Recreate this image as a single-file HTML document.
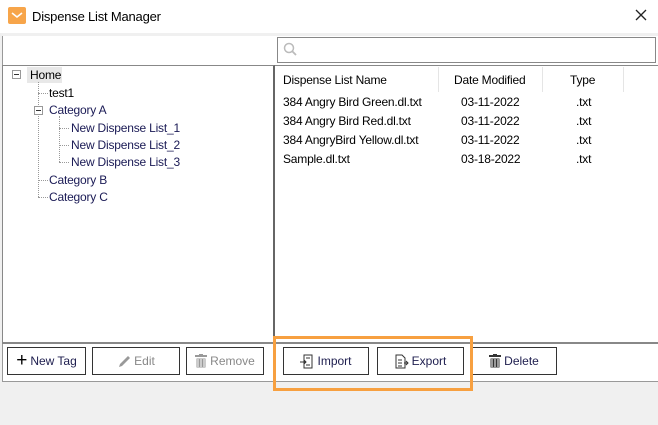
<!DOCTYPE html>
<html><head><style>
body{margin:0;width:658px;height:425px;background:#f0f0f0;font-family:"Liberation Sans",sans-serif;font-size:12px;color:#000;position:relative;overflow:hidden}
.a{position:absolute}
.btn{position:absolute;top:347px;height:28px;border:1px solid #333;background:#fff;box-sizing:border-box;display:flex;align-items:center;justify-content:center;gap:3px;font-size:12px}
.t{position:absolute;white-space:nowrap;letter-spacing:-0.2px}
.dot{position:absolute;border-color:#999;border-style:dotted;border-width:0}
.n{color:#1a1a55}
</style></head><body>
<div class="a" style="left:0;top:0;width:658px;height:33px;background:#fff"></div>
<div class="a" style="left:8px;top:7px;width:18px;height:17px;background:#f7a54a;border-radius:2px"></div>
<svg class="a" style="left:10px;top:10px" width="14" height="10"><path d="M2 3 L7 7 L12 3" stroke="#fff" stroke-width="1.6" fill="none"/></svg>
<div class="t" style="left:32px;top:9px;font-size:13px">Dispense List Manager</div>
<svg class="a" style="left:635px;top:9px" width="12" height="12"><path d="M1 1 L11 11 M11 1 L1 11" stroke="#222" stroke-width="1.3"/></svg>
<div class="a" style="left:2px;top:36px;width:656px;height:345px;background:#fff;border-bottom:1px solid #999;border-left:1px solid #999"></div>
<div class="a" style="left:277px;top:37px;width:377px;height:24px;border:1px solid #888;background:#fff"></div>
<svg class="a" style="left:283px;top:42px" width="14" height="14"><circle cx="6" cy="6" r="4.5" stroke="#bbb" stroke-width="1.5" fill="none"/><path d="M9 9 L13 13" stroke="#bbb" stroke-width="1.8"/></svg>
<div class="a" style="left:2px;top:65px;width:270px;height:277px;border:1px solid #888;border-right:2px solid #666;background:#fff"></div>
<div class="a" style="left:275px;top:65px;width:383px;height:277px;border-top:1px solid #888;border-bottom:1px solid #888;background:#fff"></div>
<div class="a" style="left:2px;top:342px;width:656px;height:1px;background:#888"></div>
<div class="a" style="left:12px;top:70px;width:9px;height:9px;border:1px solid #999;box-sizing:border-box"></div><div class="a" style="left:14px;top:74px;width:5px;height:1px;background:#333"></div>
<div class="a" style="left:27px;top:67px;width:35px;height:16px;background:#e8e8e8"></div>
<div class="t" style="left:30px;top:68px">Home</div>
<div class="dot" style="left:38px;top:82px;height:115px;border-left-width:1px"></div>
<div class="dot" style="left:38px;top:93px;width:10px;border-top-width:1px"></div>
<div class="t" style="left:49px;top:86px">test1</div>
<div class="a" style="left:34px;top:106px;width:9px;height:9px;border:1px solid #999;box-sizing:border-box;background:#fff"></div><div class="a" style="left:36px;top:110px;width:5px;height:1px;background:#333"></div>
<div class="t n" style="left:49px;top:103px">Category A</div>
<div class="dot" style="left:59px;top:116px;height:46px;border-left-width:1px"></div>
<div class="dot" style="left:59px;top:128px;width:10px;border-top-width:1px"></div>
<div class="dot" style="left:59px;top:145px;width:10px;border-top-width:1px"></div>
<div class="dot" style="left:59px;top:162px;width:10px;border-top-width:1px"></div>
<div class="t n" style="left:71px;top:121px">New Dispense List_1</div>
<div class="t n" style="left:71px;top:138px">New Dispense List_2</div>
<div class="t n" style="left:71px;top:155px">New Dispense List_3</div>
<div class="dot" style="left:38px;top:180px;width:10px;border-top-width:1px"></div>
<div class="dot" style="left:38px;top:197px;width:10px;border-top-width:1px"></div>
<div class="t n" style="left:49px;top:173px">Category B</div>
<div class="t n" style="left:49px;top:190px">Category C</div>
<div class="a" style="left:438px;top:67px;width:1px;height:25px;background:#e5e5e5"></div>
<div class="a" style="left:542px;top:67px;width:1px;height:25px;background:#e5e5e5"></div>
<div class="a" style="left:623px;top:67px;width:1px;height:25px;background:#e5e5e5"></div>
<div class="t" style="left:283px;top:73px">Dispense List Name</div>
<div class="t" style="left:454px;top:73px">Date Modified</div>
<div class="t" style="left:570px;top:73px">Type</div>
<div class="t" style="left:283px;top:95px">384 Angry Bird Green.dl.txt</div>
<div class="t" style="left:283px;top:114px">384 Angry Bird Red.dl.txt</div>
<div class="t" style="left:283px;top:133px">384 AngryBird Yellow.dl.txt</div>
<div class="t" style="left:283px;top:152px">Sample.dl.txt</div>
<div class="t" style="left:461px;top:95px">03-11-2022</div>
<div class="t" style="left:461px;top:114px">03-11-2022</div>
<div class="t" style="left:461px;top:133px">03-11-2022</div>
<div class="t" style="left:461px;top:152px">03-18-2022</div>
<div class="t" style="left:576px;top:95px">.txt</div>
<div class="t" style="left:576px;top:114px">.txt</div>
<div class="t" style="left:576px;top:133px">.txt</div>
<div class="t" style="left:576px;top:152px">.txt</div>
<div class="btn" style="left:7px;width:79px"><span style="font-size:19px;line-height:12px">+</span><span style="color:#202050">New Tag</span></div>
<div class="btn" style="left:92px;width:88px;color:#888"><svg width="14" height="14"><path d="M2 13 L3 10 L11 2 L13 4 L5 12 Z" fill="#999"/></svg>Edit</div>
<div class="btn" style="left:186px;width:78px;color:#888"><svg width="12" height="14"><rect x="0" y="1" width="12" height="2" fill="#999"/><rect x="4" y="0" width="4" height="2" fill="#999"/><path d="M1 4 H11 V14 H1Z M3 5 V13 M6 5 V13 M9 5 V13" fill="#999" stroke="#fff" stroke-width="1"/></svg>Remove</div>
<div class="btn" style="left:283px;width:86px;color:#202050"><svg width="14" height="15"><rect x="4" y="1" width="8" height="13" fill="none" stroke="#333"/><path d="M0 8 H6 M4 6 L6 8 L4 10 M6 4 H10 M6 11 H10" stroke="#333" fill="none"/></svg>Import</div>
<div class="btn" style="left:377px;width:87px;color:#202050"><svg width="14" height="15"><path d="M1 1 H7 L10 4 V14 H1Z" fill="none" stroke="#333"/><path d="M3 6 H7 M3 9 H7 M3 12 H7 M9 9 H13 M11 7 L13 9 L11 11" stroke="#333" fill="none"/></svg>Export</div>
<div class="btn" style="left:471px;width:86px;color:#202050"><svg width="12" height="14"><rect x="0" y="1" width="12" height="2" fill="#333"/><rect x="4" y="0" width="4" height="2" fill="#333"/><path d="M1 4 H11 V14 H1Z M3 5 V13 M6 5 V13 M9 5 V13" fill="#333" stroke="#fff" stroke-width="1"/></svg>Delete</div>
<div class="a" style="left:273px;top:336px;width:200px;height:55px;border:3px solid #f7a040;box-sizing:border-box"></div>
</body></html>
